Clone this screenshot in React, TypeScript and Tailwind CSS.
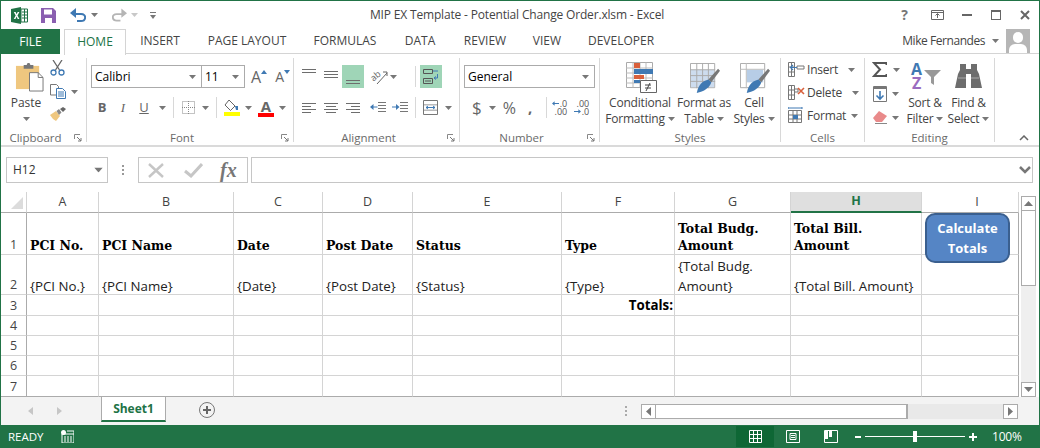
import type { ReactNode } from "react";

const ui = "font-['Open_Sans',sans-serif]";

const Caret = ({ className = "" }: { className?: string }) => (
  <svg width="7" height="4" viewBox="0 0 7 4" className={`shrink-0 ${className}`}>
    <path d="M0 0h7L3.5 4z" fill="#777" />
  </svg>
);

const Launcher = () => (
  <svg width="8" height="8" viewBox="0 0 8 8" className="absolute right-[4px] bottom-0">
    <path d="M.5 5V.5H6" stroke="#888" fill="none" />
    <path d="M3 3l4 4M7 4v3H4" stroke="#777" fill="none" />
  </svg>
);

const Group = ({ w, label, launcher, children }: { w: number; label: string; launcher?: boolean; children: ReactNode }) => (
  <div className="relative h-full shrink-0 border-r border-[#d8d8d8]" style={{ width: w }}>
    {children}
    <div className={`absolute -bottom-[5px] left-0 right-0 text-center text-[11.5px] leading-[18px] text-[#6a6a6a] ${launcher ? "pr-[16px]" : ""}`}>{label}</div>
    {launcher && <Launcher />}
  </div>
);

const Lines = ({ rows, className = "" }: { rows: [number, number][]; className?: string }) => (
  <svg width="15" height="12" viewBox="0 0 15 12" className={className}>
    {rows.map(([x, w], i) => (
      <rect key={i} x={x} y={i * 3} width={w} height="1" fill="#6d6d6d" />
    ))}
  </svg>
);

const BigLabel = ({ lines, w }: { lines: string[]; w: number }) => (
  <div className="flex flex-col items-center text-[12px] leading-[16px] tracking-[-0.2px] text-[#444] whitespace-nowrap" style={{ width: w }}>
    <span>{lines[0]}</span>
    <span className="flex items-center gap-[3px]">
      {lines[1]}
      <Caret />
    </span>
  </div>
);

const ExcelLogo = () => (
  <svg width="17" height="17" viewBox="0 0 17 17">
    <path d="M10 2h6.5v13H10z" fill="#fff" stroke="#217346" />
    <path d="M11 5h5M11 8h5M11 11h5M13.500 2v13" stroke="#217346" />
    <path d="M0 2l10-2v17L0 15z" fill="#217346" />
    <path d="M2.800 5h1.800l1 2.300L6.700 5h1.700L6.500 8.500 8.400 12H6.700l-1.100-2.400L4.500 12H2.800l1.900-3.500z" fill="#fff" />
  </svg>
);

const Paste = () => (
  <svg width="29" height="30" viewBox="0 0 30 31">
    <path d="M1 4h24v24H1z" fill="#efc77f" />
    <path d="M9 3h3l1-2h2l1 2h3v4H9z" fill="#777" />
    <path d="M15 11h9l5 5v14H15z" fill="#fff" stroke="#777" />
    <path d="M24 11v5h5" fill="none" stroke="#777" />
  </svg>
);

const Scissors = () => (
  <svg width="15" height="16" viewBox="0 0 15 16" fill="none">
    <path d="M3 0l6.500 10M12 0L5.500 10" stroke="#666" strokeWidth="1.300" />
    <circle cx="3.500" cy="12.500" r="2.500" stroke="#3f79b3" strokeWidth="1.300" />
    <circle cx="11.500" cy="12.500" r="2.500" stroke="#3f79b3" strokeWidth="1.300" />
  </svg>
);

const Copy = () => (
  <svg width="16" height="15" viewBox="0 0 16 15" fill="none">
    <path d="M.5.500h6l2 2V11H.5z" fill="#fff" stroke="#777" />
    <path d="M6.500 4.500h6l3 3v7h-9z" fill="#fff" stroke="#3f79b3" />
    <path d="M8 8h6M8 10h6M8 12h6" stroke="#3f79b3" />
  </svg>
);

const Brush = () => (
  <svg width="16" height="14" viewBox="0 0 16 14">
    <path d="M0 8l6-4 4 5-4 5-3-2z" fill="#efc77f" />
    <path d="M6.500 4L9 2l2.500 3.500L9 8z" fill="#888" />
    <path d="M10 2l3-2 3 2-3 3z" fill="#666" />
  </svg>
);

const GrowA = ({ up, small }: { up: boolean; small?: boolean }) => (
  <div className="flex items-start">
    <span className={`leading-[20px] text-[#666] ${small ? "text-[14px]" : "text-[16px]"}`}>A</span>
    <svg width="6" height="4" viewBox="0 0 6 4" className="mt-[3px]">
      <path d={up ? "M3 0l3 4H0z" : "M0 0h6L3 4z"} fill="#3f79b3" />
    </svg>
  </div>
);

const Borders = () => (
  <svg width="13" height="13" viewBox="0 0 13 13" fill="none">
    <path d="M.5.500h12v12H.5zM6.500 0v13M0 6.500h13" stroke="#888" strokeDasharray="1 1" />
  </svg>
);

const Fill = () => (
  <svg width="16" height="18" viewBox="0 0 16 18">
    <path d="M5 1l6 6-4.500 4.500L1 6z" fill="#fff" stroke="#666" />
    <path d="M11 7h3v4h-2z" fill="#3f79b3" />
    <rect y="13" width="16" height="4" fill="#ffff00" />
  </svg>
);

const ColorA = () => (
  <div className="flex h-[18px] w-[16px] flex-col items-center">
    <span className="text-[15px] font-bold leading-[14px] text-[#666]">A</span>
    <span className="mt-auto h-[4px] w-[16px] bg-[#ff0000]" />
  </div>
);

const Orient = () => (
  <svg width="18" height="16" viewBox="0 0 18 16" fill="none" className="overflow-visible">
    <text x="1" y="10" fontSize="9" fill="#666" transform="rotate(-40 6 8)" fontFamily="Open Sans">ab</text>
    <path d="M7 15L17 4M13 3h4v4" stroke="#666" />
  </svg>
);

const Wrap = () => (
  <svg width="16" height="16" viewBox="0 0 16 16" fill="none">
    <path d="M.5.500h9v4h-9zM.5 9.500h9v5h-9zM2 12h6" stroke="#555" />
    <path d="M10 2h5M11 9h3.500V5M11 9l2-1.500M11 9l2 1.500" stroke="#3f79b3" />
  </svg>
);

const Indent = ({ flip }: { flip?: boolean }) => (
  <svg width="16" height="11" viewBox="0 0 16 11">
    <path d="M8 0h8v1H8zM8 3h8v1H8zM8 6h8v1H8zM8 9h8v1H8z" fill="#777" />
    <path d={flip ? "M0 4.500h4V2l3.500 3L4 8V5.500H0z" : "M7.500 4.500h-4V2L0 5l3.500 3V5.500h4z"} fill="#3f79b3" />
  </svg>
);

const Merge = () => (
  <svg width="15" height="15" viewBox="0 0 15 15" fill="none">
    <path d="M.5.500h14v14H.5zM0 5h15M0 10h15" stroke="#777" />
    <rect x="1" y="5.500" width="13" height="4" fill="#fff" />
    <path d="M3 7.500h9M3 7.500l2-1.500M3 7.500l2 1.500M12 7.500l-2-1.500M12 7.500l-2 1.500" stroke="#3f79b3" />
  </svg>
);

const Decimal = ({ more }: { more?: boolean }) => (
  <div className="relative h-[15px] w-[15px] text-[9px] leading-[7px] text-[#555]">
    <span className="absolute right-0 top-0">{more ? ".00" : ".0"}</span>
    <span className="absolute right-0 bottom-0">{more ? ".0" : ".00"}</span>
    <svg width="7" height="5" viewBox="0 0 8 5" className={`absolute left-0 ${more ? "bottom-[1px]" : "top-[1px]"}`}>
      <path d={more ? "M0 2h5V0l3 2.500L5 5V3H0z" : "M8 2H3V0L0 2.500 3 5V3h5z"} fill="#3f79b3" />
    </svg>
  </div>
);

const CondFormat = () => (
  <svg width="31" height="32" viewBox="0 0 31 32" fill="none">
    <path d="M.5.500h26v25H.5z" fill="#fff" stroke="#aaa" />
    <path d="M7 .500v25M14 .500v25M20 .500v25M0 6h27M0 11h27M0 16h27M0 21h27" stroke="#bbb" />
    <rect x="8" y="1" width="6" height="5" fill="#d9603b" />
    <rect x="8" y="7" width="19" height="5" fill="#3f79b3" />
    <rect x="8" y="13" width="10" height="4" fill="#d9603b" />
    <rect x="8" y="18" width="6" height="3" fill="#3f79b3" />
    <path d="M14.500 18.500h16v12h-16z" fill="#fff" stroke="#666" />
    <path d="M19 23h6M19 26h6M24 21l-4 8" stroke="#444" />
  </svg>
);

const TableBrush = ({ light }: { light?: boolean }) => (
  <svg width="30" height="30" viewBox="0 0 31 31" fill="none">
    <path d="M.5.500h25v25H.5z" fill="#fff" stroke="#aaa" />
    {light ? (
      <rect x="7" y="7" width="17" height="13" fill="#b7cde6" />
    ) : (
      <>
        <rect x="1" y="7" width="24" height="18" fill="#cddcee" />
        <path d="M0 7h26M0 13h26M0 19h26M7 0v26M13 0v26M19 0v26" stroke="#aaa" />
      </>
    )}
    {light && <path d="M6.500 0v26M0 6.500h26" stroke="#bbb" />}
    <path d="M19 17l10-11 2 2-9 12z" fill="#777" />
    <path d="M7 31c1-6 4-12 12-14l3 3c-1 5-8 10-15 11z" fill="#3f79b3" />
  </svg>
);

const CellIcon = ({ kind }: { kind: "insert" | "delete" | "format" }) => (
  <svg width="17" height="17" viewBox="0 0 17 17" fill="none">
    {kind === "format" ? (
      <>
        <path d="M.5 3.500h13v12H.5zM5 4v11M9 4v11M1 8h12M1 12h12" stroke="#777" />
        <rect x="5" y="8" width="5" height="4" fill="#3f79b3" />
        <path d="M0 1h14M0 0v2M14 0v2" stroke="#3f79b3" />
      </>
    ) : kind === "insert" ? (
      <>
        <path d="M.5 1.500h6v14h-6zM1 6h6M1 11h6M3.500 2v13M9 5h7v3H9z" stroke="#777" />
        <path d="M9 6.500H3M5 4L2.500 6.500 5 9" stroke="#3f79b3" strokeWidth="1.200" />
      </>
    ) : (
      <>
        <path d="M.5 1.500h6v14h-6zM1 6h6M1 11h6M3.500 2v13M7 5h3v3H7" stroke="#777" />
        <path d="M10 4l6 6M16 4l-6 6" stroke="#d9603b" strokeWidth="1.600" />
      </>
    )}
  </svg>
);

const SortFilter = () => (
  <svg width="30" height="28" viewBox="0 0 30 28" className="overflow-visible">
    <path d="M13 7h17l-7 7v8l-3-2v-6z" fill="#999" />
    <text x="0" y="12" fontSize="16" fontWeight="700" fill="#3f79b3" fontFamily="Open Sans">A</text>
    <text x="1" y="26" fontSize="16" fontWeight="700" fill="#9b6cc0" fontFamily="Open Sans">Z</text>
  </svg>
);

const Binoculars = () => (
  <svg width="27" height="24" viewBox="0 0 27 24" fill="#6d6d6d">
    <path d="M5 0h6v5h5V0h6v6l2 4 3 14H16V10h-5v14H0l3-14 2-4z" />
    <path d="M3 14h8M16 14h8" stroke="#aaa" />
  </svg>
);

const TABS = ["INSERT", "PAGE LAYOUT", "FORMULAS", "DATA", "REVIEW", "VIEW", "DEVELOPER"];
const TAB_WIDTHS = [68, 106, 90, 60, 70, 54, 94];

const COLS = ["A", "B", "C", "D", "E", "F", "G", "H", "I"];
const COL_WIDTHS = [72, 135, 89, 90, 149, 113, 116, 131, 97];

const HEADERS = ["PCI No.", "PCI Name", "Date", "Post Date", "Status", "Type", "Total Budg. Amount", "Total Bill. Amount", ""];
const FIELDS = ["{PCI No.}", "{PCI Name}", "{Date}", "{Post Date}", "{Status}", "{Type}", "{Total Budg. Amount}", "{Total Bill. Amount}", ""];
const ROW_HEIGHTS = [42, 40, 21, 20, 20, 20, 21];

const gridTemplate = { gridTemplateColumns: `26px ${COL_WIDTHS.map((w) => `${w}px`).join(" ")}` };

const Sheet = () => (
  <div className="relative w-[1018px] shrink-0">
    <div className="grid" style={gridTemplate}>
      <div className="relative h-[21px] border-r border-b border-[#ababab] border-r-[#d4d4d4]">
        <svg width="12" height="12" viewBox="0 0 12 12" className="absolute right-[3px] bottom-[3px]">
          <path d="M12 0v12H0z" fill="#dcdcdc" />
        </svg>
      </div>
      {COLS.map((c) => (
        <div
          key={c}
          className={`flex h-[21px] items-center justify-center border-r text-[12.5px] ${
            c === "H"
              ? "border-b-2 border-b-[#217346] border-r-[#d4d4d4] bg-[#dfdfdf] font-bold text-[#217346]"
              : "border-b border-b-[#ababab] border-r-[#d4d4d4] text-[#444]"
          } ${c === "I" ? "pl-[14px]" : ""}`}
        >
          {c}
        </div>
      ))}
      {ROW_HEIGHTS.map((h, r) => (
        <Row key={r} index={r} height={h} last={r === ROW_HEIGHTS.length - 1} />
      ))}
    </div>
    <button className="absolute left-[924px] top-[21px] h-[50px] w-[85px] rounded-[10px] border-2 border-[#3a5f8f] bg-[#5585c5] text-[13px] font-bold leading-[20px] text-white">
      Calculate
      <br />
      Totals
    </button>
  </div>
);

const Row = ({ index, height, last }: { index: number; height: number; last: boolean }) => (
  <>
    <div
      className={`flex items-end justify-center border-r border-b border-[#d4d4d4] border-r-[#ababab] text-[12.5px] leading-[18px] text-[#444] ${last ? "border-b-[#ababab]" : ""}`}
      style={{ height }}
    >
      {index + 1}
    </div>
    {COLS.map((c, i) => (
      <div
        key={c}
        className={`flex items-end border-r border-b border-[#d4d4d4] pl-[3px] text-black ${c === "I" ? "border-r-[#ababab]" : ""} ${last ? "border-b-[#ababab]" : ""}`}
        style={{ height }}
      >
        {index === 0 && (
          <span className="font-['DejaVu_Serif',serif] text-[12.5px] font-bold leading-[17px] pr-[6px]">{HEADERS[i]}</span>
        )}
        {index === 1 && <span className="-mb-[2px] text-[13.3px] leading-[20px] text-[#222]">{FIELDS[i]}</span>}
        {index === 2 && c === "F" && <span className="w-full pr-[1px] text-right text-[13.3px] font-bold leading-[19px]">Totals:</span>}
      </div>
    ))}
  </>
);

export default function App() {
  return (
    <div className={`flex h-[448px] w-[1040px] flex-col overflow-hidden border-x border-t border-[#217346] bg-white ${ui}`}>
      {/* title bar */}
      <div className="relative flex h-[28px] shrink-0 items-center text-[#444]">
        <div className="ml-[10px]"><ExcelLogo /></div>
        <svg width="15" height="15" viewBox="0 0 15 15" className="ml-[13px]">
          <path d="M0 0h12l3 3v12H0z" fill="#8a5fb0" />
          <rect x="3" y="1.500" width="8" height="5" fill="#fff" />
          <rect x="4" y="10" width="7" height="5" fill="#fff" />
        </svg>
        <svg width="16" height="14" viewBox="0 0 16 14" fill="none" className="ml-[14px]">
          <path d="M4 6h7c6 0 5 7 0 7H7" stroke="#3f79b3" strokeWidth="2" />
          <path d="M0 5l6-5v10z" fill="#3f79b3" />
        </svg>
        <Caret className="ml-[5px]" />
        <svg width="15" height="14" viewBox="0 0 16 14" fill="none" className="ml-[14px]">
          <path d="M12 6H5c-6 0-5 7 0 7h4" stroke="#b5b5b5" strokeWidth="2" />
          <path d="M16 5l-6-5v10z" fill="#b5b5b5" />
        </svg>
        <Caret className="ml-[4px] opacity-40" />
        <svg width="6" height="7" viewBox="0 0 6 7" className="ml-[12px]">
          <path d="M0 0h6v1H0zM0 3h6L3 7z" fill="#777" />
        </svg>
        <div className="absolute left-0 right-[6px] text-center text-[12px] tracking-[-0.17px] text-[#444]">MIP EX Template - Potential Change Order.xlsm - Excel</div>
        <div className="ml-auto mr-[9px] flex items-center">
          <span className="mr-[23px] text-[14px] font-bold leading-none text-[#777]">?</span>
          <svg width="13" height="10" viewBox="0 0 13 10" fill="none" className="mr-[18px]">
            <path d="M.5.500h12v9H.5zM0 2.500h13M6.500 8V4M4.500 5.500l2-2 2 2" stroke="#666" />
          </svg>
          <span className="mr-[19px] h-[2px] w-[10px] bg-[#666]" />
          <span className="mr-[19px] h-[10px] w-[10px] border border-t-2 border-[#666]" />
          <svg width="10" height="10" viewBox="0 0 10 10">
            <path d="M1 1l8 8M9 1L1 9" stroke="#666" strokeWidth="2" />
          </svg>
        </div>
      </div>

      {/* tab strip */}
      <div className="flex h-[25px] shrink-0 text-[12px] text-[#444]">
        <div className="flex h-[25px] w-[59px] items-center justify-center bg-[#217346] text-white">FILE</div>
        <div className="relative z-10 ml-[4px] flex h-[26px] w-[62px] items-center justify-center border-x border-t border-[#d4d4d4] bg-white pb-[1px] text-[#217346]">HOME</div>
        <div className="flex flex-1 items-center border-b border-[#d4d4d4]">
          {TABS.map((t, i) => (
            <div key={t} className="text-center" style={{ width: TAB_WIDTHS[i] }}>{t}</div>
          ))}
          <div className="ml-auto flex items-center">
            <span className="tracking-[-0.45px]">Mike Fernandes</span>
            <Caret className="ml-[7px] mr-[7px]" />
            <div className="relative mr-[9px] h-[24px] w-[24px] overflow-hidden bg-[#b6b6b6]">
              <span className="absolute left-[7px] top-[3px] h-[11px] w-[10px] rounded-full bg-white" />
              <span className="absolute left-[3px] top-[15px] h-[12px] w-[18px] rounded-t-[6px] bg-white" />
            </div>
          </div>
        </div>
      </div>

      {/* ribbon */}
      <div className="relative flex h-[93px] shrink-0 border-b-2 border-[#dadada] pt-[4px] pb-[3px] text-[#444]">
        <Group w={86} label="Clipboard" launcher>
          <div className="flex pl-[6px]">
            <div className="flex w-[38px] flex-col items-center pt-[4px]">
              <div className="ml-[6px]"><Paste /></div>
              <span className="mt-[3px] text-[12px] leading-[16px]">Paste</span>
              <Caret className="mt-[6px]" />
            </div>
            <div className="ml-[5px] flex flex-col gap-[8px] pt-[2px]">
              <Scissors />
              <div className="flex items-center gap-[5px]"><Copy /><Caret /></div>
              <Brush />
            </div>
          </div>
        </Group>

        <Group w={207} label="Font" launcher>
          <div className="flex items-center pl-[4px] pt-[7px]">
            <div className="flex h-[23px] w-[111px] items-center justify-between border border-[#ababab] px-[3px] text-[12px] text-black">
              Calibri<Caret className="mr-[2px]" />
            </div>
            <div className="-ml-[1px] flex h-[23px] w-[44px] items-center justify-between border border-[#ababab] px-[3px] text-[12px] text-black">
              11<Caret className="mr-[2px]" />
            </div>
            <div className="ml-[6px]"><GrowA up /></div>
            <div className="ml-[8px]"><GrowA up={false} small /></div>
          </div>
          <div className="mt-[9px] flex h-[21px] items-center pl-[5px] text-[13px] text-[#666]">
            <span className="w-[20px] text-center font-bold">B</span>
            <span className="ml-[1px] w-[20px] text-center font-['Liberation_Serif',serif] italic">I</span>
            <span className="ml-[1px] w-[20px] text-center underline">U</span>
            <Caret className="ml-[5px]" />
            <span className="ml-[7px] h-[21px] w-px bg-[#d8d8d8]" />
            <div className="ml-[8px]"><Borders /></div>
            <Caret className="ml-[7px]" />
            <span className="ml-[7px] h-[21px] w-px bg-[#d8d8d8]" />
            <div className="ml-[7px]"><Fill /></div>
            <Caret className="ml-[5px]" />
            <div className="ml-[6px]"><ColorA /></div>
            <Caret className="ml-[5px]" />
          </div>
        </Group>

        <Group w={166} label="Alignment" launcher>
          <div className="mt-[7px] flex h-[23px] items-center pl-[8px]">
            <Lines rows={[[0, 14], [0, 14]]} className="mb-[4px]" />
            <Lines rows={[[0, 14], [0, 14], [0, 14]]} className="ml-[7px]" />
            <div className="ml-[3px] flex h-[23px] w-[22px] items-end justify-center bg-[#9fd5b7] pb-[1px]">
              <Lines rows={[[0, 14], [0, 14]]} className="-mb-[5px]" />
            </div>
            <div className="ml-[6px]"><Orient /></div>
            <Caret className="ml-[2px]" />
            <span className="ml-[18px] h-[21px] w-px bg-[#d8d8d8]" />
            <div className="ml-[4px] flex h-[23px] w-[22px] items-center justify-center bg-[#9fd5b7]"><Wrap /></div>
          </div>
          <div className="mt-[9px] flex h-[21px] items-center pl-[8px]">
            <Lines rows={[[0, 14], [0, 9], [0, 14], [0, 9]]} className="mt-[2px]" />
            <Lines rows={[[0, 14], [2, 10], [0, 14], [2, 10]]} className="ml-[7px] mt-[2px]" />
            <Lines rows={[[0, 14], [5, 9], [0, 14], [5, 9]]} className="ml-[7px] mt-[2px]" />
            <div className="ml-[9px]"><Indent /></div>
            <div className="ml-[6px]"><Indent flip /></div>
            <span className="ml-[7px] h-[21px] w-px bg-[#d8d8d8]" />
            <div className="ml-[7px]"><Merge /></div>
            <Caret className="ml-[7px]" />
          </div>
        </Group>

        <Group w={140} label="Number" launcher>
          <div className="ml-[4px] mt-[7px] flex h-[23px] w-[131px] items-center justify-between border border-[#ababab] px-[3px] text-[12px] text-black">
            General<Caret className="mr-[2px]" />
          </div>
          <div className="mt-[9px] flex h-[21px] items-center pl-[12px] text-[#666]">
            <span className="text-[17px] leading-none">$</span>
            <Caret className="ml-[7px]" />
            <span className="ml-[7px] text-[16px] leading-none">%</span>
            <span className="ml-[12px] text-[15px] font-bold leading-none">,</span>
            <span className="ml-[14px] h-[21px] w-px bg-[#d8d8d8]" />
            <div className="ml-[5px]"><Decimal /></div>
            <div className="ml-[7px]"><Decimal more /></div>
          </div>
        </Group>

        <Group w={181} label="Styles">
          <div className="flex">
            <div className="flex w-[80px] flex-col items-center">
              <div className="h-[37px] pl-[2px] pt-[4px]"><CondFormat /></div>
              <BigLabel lines={["Conditional", "Formatting"]} w={80} />
            </div>
            <div className="flex w-[48px] flex-col items-center">
              <div className="h-[37px] pl-[2px] pt-[5px]"><TableBrush /></div>
              <BigLabel lines={["Format as", "Table"]} w={48} />
            </div>
            <div className="flex w-[52px] flex-col items-center">
              <div className="h-[37px] pl-[2px] pt-[5px]"><TableBrush light /></div>
              <BigLabel lines={["Cell", "Styles"]} w={52} />
            </div>
          </div>
        </Group>

        <Group w={84} label="Cells">
          <div className="flex flex-col gap-[6px] pl-[7px] pt-[3px] text-[12px] leading-[17px] tracking-[-0.2px]">
            <div className="flex items-center gap-[2px]"><CellIcon kind="insert" />Insert<Caret className="ml-[8px]" /></div>
            <div className="flex items-center gap-[2px]"><CellIcon kind="delete" />Delete<Caret className="ml-[8px]" /></div>
            <div className="flex items-center gap-[2px]"><CellIcon kind="format" />Format<Caret className="ml-[3px]" /></div>
          </div>
        </Group>

        <Group w={130} label="Editing">
          <div className="flex pl-[7px]">
            <div className="flex w-[31px] flex-col gap-[5px] pt-[2px]">
              <div className="flex h-[19px] items-center gap-[6px]">
                <svg width="15" height="15" viewBox="0 0 15 15" fill="none">
                  <path d="M14.500 3V1H2l6 6.500L2 14h12.500v-2" stroke="#555" strokeWidth="2" />
                </svg>
                <Caret />
              </div>
              <div className="flex h-[19px] items-center gap-[5px] pl-[1px]">
                <svg width="14" height="16" viewBox="0 0 14 16" fill="none">
                  <path d="M.5.500h13v15H.5z" fill="#fff" stroke="#777" />
                  <path d="M0 2h14" stroke="#777" strokeWidth="2" />
                  <path d="M7 5v8M3.500 9.500L7 13l3.500-3.500" stroke="#3f79b3" strokeWidth="1.600" />
                </svg>
                <Caret />
              </div>
              <div className="flex h-[19px] items-center gap-[5px] pl-[1px]">
                <svg width="14" height="13" viewBox="0 0 14 13">
                  <path d="M0 7l6-7 8 5-5 6H3z" fill="#e98a8a" />
                  <path d="M2 12.500h12" stroke="#888" />
                </svg>
                <Caret />
              </div>
            </div>
            <div className="flex w-[44px] flex-col items-center">
              <div className="h-[37px] pl-[2px] pt-[5px]"><SortFilter /></div>
              <BigLabel lines={["Sort &", "Filter"]} w={44} />
            </div>
            <div className="flex w-[43px] flex-col items-center">
              <div className="h-[37px] pt-[6px]"><Binoculars /></div>
              <BigLabel lines={["Find &", "Select"]} w={43} />
            </div>
          </div>
        </Group>

        <svg width="10" height="6" viewBox="0 0 10 6" fill="none" className="absolute right-[10px] bottom-[4px]">
          <path d="M1 5l4-4 4 4" stroke="#666" strokeWidth="1.500" />
        </svg>
      </div>

      {/* formula bar */}
      <div className="mt-[10px] flex h-[26px] shrink-0 items-center pl-[5px] pr-[6px]">
        <div className="flex h-[26px] w-[102px] items-center justify-between border border-[#c6c6c6] pl-[6px] pr-[5px] text-[12px] text-[#333]">
          H12<Caret className="scale-125" />
        </div>
        <div className="ml-[14px] flex flex-col gap-[2px]">
          <span className="h-[2px] w-[2px] bg-[#999]" />
          <span className="h-[2px] w-[2px] bg-[#999]" />
          <span className="h-[2px] w-[2px] bg-[#999]" />
        </div>
        <div className="ml-[14px] flex h-[26px] w-[110px] items-center border border-[#c6c6c6] pl-[9px]">
          <svg width="16" height="15" viewBox="0 0 16 15"><path d="M1 1l14 13M15 1L1 14" stroke="#c6c6c6" strokeWidth="2.400" /></svg>
          <svg width="19" height="15" viewBox="0 0 19 15" className="ml-[20px]"><path d="M1 8l6 5L18 1" fill="none" stroke="#c6c6c6" strokeWidth="3" /></svg>
          <span className="ml-[17px] font-['Liberation_Serif',serif] text-[20px] font-bold italic leading-none text-[#777]">fx</span>
        </div>
        <div className="ml-[3px] flex h-[26px] flex-1 items-center justify-end border border-[#c6c6c6] pr-[1px]">
          <svg width="12" height="8" viewBox="0 0 12 8"><path d="M1 1l5 5 5-5" fill="none" stroke="#777" strokeWidth="2.500" /></svg>
        </div>
      </div>

      {/* sheet */}
      <div className="mt-[9px] flex h-[205px] shrink-0 overflow-hidden">
        <Sheet />
        <div className="ml-[2px] mt-[4px] flex w-[15px] flex-col bg-[#efefef]">
          <div className="flex h-[15px] shrink-0 items-center justify-center border border-[#ababab] bg-white"><svg width="9" height="5" viewBox="0 0 9 5"><path d="M4.500 0L9 5H0z" fill="#777" /></svg></div>
          <div className="h-[75px] shrink-0 border border-t-0 border-[#ababab] bg-white" />
          <div className="mt-auto flex h-[15px] shrink-0 items-center justify-center border border-[#ababab] bg-white"><svg width="9" height="5" viewBox="0 0 9 5"><path d="M0 0h9L4.500 5z" fill="#777" /></svg></div>
        </div>
      </div>

      {/* sheet tabs */}
      <div className="flex h-[28px] shrink-0 items-start bg-[#f3f3f3]">
        <svg width="5" height="8" viewBox="0 0 5 8" className="ml-[27px] mt-[10px]"><path d="M5 0v8L0 4z" fill="#c6c6c6" /></svg>
        <svg width="5" height="8" viewBox="0 0 5 8" className="ml-[24px] mt-[10px]"><path d="M0 0v8l5-4z" fill="#c6c6c6" /></svg>
        <div className="ml-[39px] flex h-[25px] w-[65px] items-center justify-center border-x border-[#ababab] border-b-2 border-b-[#217346] bg-white text-[12px] font-bold text-[#217346]">Sheet1</div>
        <div className="ml-[33px] mt-[5px] flex h-[16px] w-[16px] items-center justify-center rounded-full border border-[#777]">
          <svg width="8" height="8" viewBox="0 0 8 8"><path d="M4 0v8M0 4h8" stroke="#666" strokeWidth="2" /></svg>
        </div>
        <div className="ml-[410px] mt-[9px] flex flex-col gap-[2px]">
          <span className="h-[2px] w-[2px] bg-[#aaa]" />
          <span className="h-[2px] w-[2px] bg-[#aaa]" />
          <span className="h-[2px] w-[2px] bg-[#aaa]" />
        </div>
        <div className="ml-[14px] mt-[7px] flex h-[15px] w-[377px] bg-[#e9e9e9]">
          <div className="flex w-[15px] items-center justify-center border border-[#ababab] bg-white"><svg width="5" height="9" viewBox="0 0 5 9"><path d="M5 0v9L0 4.500z" fill="#777" /></svg></div>
          <div className="w-[252px] border-y border-r-2 border-[#ababab] bg-white" />
          <div className="ml-auto flex w-[15px] items-center justify-center border border-[#ababab] bg-white"><svg width="5" height="9" viewBox="0 0 5 9"><path d="M0 0v9l5-4.500z" fill="#777" /></svg></div>
        </div>
      </div>

      {/* status bar */}
      <div className="flex h-[23px] shrink-0 items-center bg-[#217346] pl-[7px] text-[12px] text-white">
        <span className="w-[53px] text-[11.5px]">READY</span>
        <svg width="13" height="13" viewBox="0 0 13 13">
          <circle cx="2.500" cy="2.500" r="2.500" fill="#fff" />
          <path d="M6 1h7v3H1v9h12V4" fill="none" stroke="#fff" />
          <path d="M3 7h8M3 9h8M3 11h8" stroke="#fff" strokeDasharray="2 1" />
        </svg>
        <div className="ml-[662px] flex h-[21px] w-[38px] items-center justify-center bg-[#0e6735]">
          <svg width="13" height="13" viewBox="0 0 13 13" fill="none"><path d="M.5.500h12v12H.5zM4.500 0v13M8.500 0v13M0 4.500h13M0 8.500h13" stroke="#fff" /></svg>
        </div>
        <svg width="14" height="13" viewBox="0 0 14 13" fill="none" className="ml-[12px]">
          <path d="M.5.500h13v12H.5zM4 3.500h6v6H4zM5 5.500h4M5 7.500h4" stroke="#fff" />
        </svg>
        <svg width="14" height="13" viewBox="0 0 14 13" fill="none" className="ml-[24px]">
          <path d="M.5.500h13v12H.5z" stroke="#fff" />
          <path d="M1 1h3v8H1zM5 1h3v6H5z" fill="#fff" />
        </svg>
        <span className="ml-[17px] h-[2px] w-[6px] bg-white" />
        <div className="relative ml-[4px] h-px w-[100px] bg-white">
          <span className="absolute left-[48px] top-[-5px] h-[11px] w-[4px] bg-white" />
        </div>
        <svg width="8" height="8" viewBox="0 0 8 8" className="ml-[4px]"><path d="M4 0v8M0 4h8" stroke="#fff" strokeWidth="2" /></svg>
        <span className="ml-[15px] tracking-[-0.2px]">100%</span>
      </div>
    </div>
  );
}
